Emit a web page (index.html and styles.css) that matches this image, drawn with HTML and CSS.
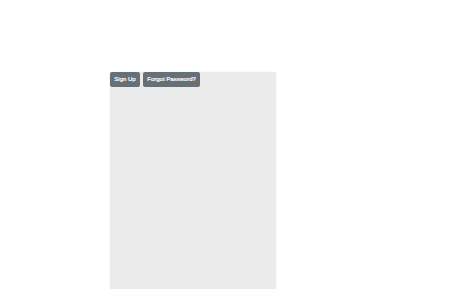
FILE: index.html
```html
<!DOCTYPE html>
<html>
<head>
<meta charset="utf-8">
<link rel="stylesheet" href="styles.css">
</head>
<body>
<div class="page">
  <div class="panel">
    <div class="actions">
      <button class="btn">Sign Up</button>
      <button class="btn">Forgot Password?</button>
    </div>
  </div>
</div>
</body>
</html>
```
FILE: styles.css
```css
html, body {
  margin: 0;
  padding: 0;
  background: #ffffff;
}
.page {
  padding: 72px 0 0 110px;
}
.panel {
  width: 166px;
  height: 217px;
  background: #ebebeb;
  box-shadow: 0 0 1px rgba(0,0,0,0.12);
}
.actions {
  display: flex;
  gap: 3px;
}
.btn {
  height: 14.5px;
  padding: 0 4.3px;
  border: none;
  border-radius: 2px;
  background: #687077;
  color: #ffffff;
  font-family: "Liberation Sans", Arial, sans-serif;
  font-size: 6px;
  line-height: 14.5px;
  -webkit-text-stroke: 0.2px #ffffff;
}
```
